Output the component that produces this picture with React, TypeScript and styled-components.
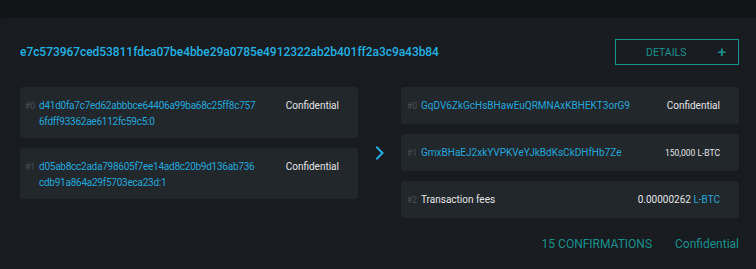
import React from 'react';
import styled, { createGlobalStyle } from 'styled-components';

const GlobalStyle = createGlobalStyle`
  html, body {
    margin: 0;
    padding: 0;
    background: #121418;
  }
  body {
    font-family: Roboto, "Liberation Sans", sans-serif;
    -webkit-font-smoothing: antialiased;
  }
`;

const Page = styled.div`
  padding-top: 18px;
  width: 756px;
  height: 269px;
  box-sizing: border-box;
  overflow: hidden;
`;

const Card = styled.section`
  background: #181b1f;
  height: 251px;
  padding: 21px 17px 0 20px;
  box-sizing: border-box;
  border-top-left-radius: 3px;
`;

const Header = styled.div`
  display: flex;
  align-items: center;
  justify-content: space-between;
  height: 26px;
`;

const TxId = styled.div`
  color: #22b2e3;
  font-size: 12px;
  font-weight: 500;
  letter-spacing: -0.05px;
`;

const DetailsButton = styled.button`
  width: 124px;
  height: 26px;
  box-sizing: border-box;
  border: 1px solid #1a948f;
  background: transparent;
  color: #1a928e;
  font-family: inherit;
  font-size: 10.5px;
  display: flex;
  align-items: center;
  justify-content: space-between;
  padding: 0 12px 0 30px;
  cursor: pointer;
`;

const Plus = styled.span`
  font-size: 15px;
  font-weight: 500;
  line-height: 1;
`;

const Flow = styled.div`
  display: grid;
  grid-template-columns: 338px 43px 338px;
  align-items: start;
  margin-top: 22px;
`;

const Column = styled.div`
  display: flex;
  flex-direction: column;
  gap: 10px;
`;

const Row = styled.div<{ $tall?: boolean }>`
  background: #22272c;
  border-radius: 3px;
  display: flex;
  align-items: ${p => (p.$tall ? 'flex-start' : 'center')};
  height: ${p => (p.$tall ? '51px' : '37px')};
  box-sizing: border-box;
  padding: ${p => (p.$tall ? '11px 19px 0 5px' : '0 19px 0 6px')};
`;

const Index = styled.span`
  color: #4b5158;
  font-size: 8.5px;
  width: 14px;
  flex-shrink: 0;
  line-height: 16px;
`;

const Hash = styled.span`
  color: #22a8dc;
  font-size: 10px;
  line-height: 16px;
  letter-spacing: -0.25px;
  flex: 1;
  word-break: break-all;
`;

const Address = styled.span`
  color: #22a8dc;
  font-size: 10px;
  line-height: 16px;
  flex: 1;
`;

const Label = styled.span`
  color: #e4e5e6;
  font-size: 10px;
  line-height: 16px;
  flex: 1;
`;

const Amount = styled.span<{ $small?: boolean }>`
  color: #e4e5e6;
  font-size: ${p => (p.$small ? '8.5px' : '10px')};
  line-height: 16px;
  white-space: nowrap;
`;

const Unit = styled.span`
  color: #22a8dc;
`;

const ArrowCell = styled.div`
  display: flex;
  justify-content: center;
  align-self: center;
`;

const Footer = styled.div`
  display: flex;
  justify-content: flex-end;
  gap: 23px;
  margin-top: 18px;
  color: #1a928e;
  font-size: 12px;
  line-height: 16px;
`;

const inputs = [
  { hash: 'd41d0fa7c7ed62abbbce64406a99ba68c25ff8c757', tail: '6fdff93362ae6112fc59c5:0' },
  { hash: 'd05ab8cc2ada798605f7ee14ad8c20b9d136ab736', tail: 'cdb91a864a29f5703eca23d:1' },
];

const App: React.FC = () => {
  return (
    <Page>
      <GlobalStyle />
      <Card>
        <Header>
          <TxId>e7c573967ced53811fdca07be4bbe29a0785e4912322ab2b401ff2a3c9a43b84</TxId>
          <DetailsButton>
            <span>DETAILS</span>
            <Plus>+</Plus>
          </DetailsButton>
        </Header>

        <Flow>
          <Column>
            {inputs.map((input, i) => (
              <Row $tall key={i}>
                <Index>#{i}</Index>
                <Hash>
                  {input.hash}
                  <br />
                  {input.tail}
                </Hash>
                <Amount>Confidential</Amount>
              </Row>
            ))}
          </Column>

          <ArrowCell>
            <svg width="10" height="14" viewBox="0 0 10 14" fill="none">
              <path d="M2 1.5 L7.5 7 L2 12.5" stroke="#22aee2" strokeWidth="2" strokeLinecap="square" />
            </svg>
          </ArrowCell>

          <Column>
            <Row>
              <Index>#0</Index>
              <Address>GqDV6ZkGcHsBHawEuQRMNAxKBHEKT3orG9</Address>
              <Amount>Confidential</Amount>
            </Row>
            <Row>
              <Index>#1</Index>
              <Address>GmxBHaEJ2xkYVPKVeYJkBdKsCkDHfHb7Ze</Address>
              <Amount $small>150,000 L-BTC</Amount>
            </Row>
            <Row>
              <Index>#2</Index>
              <Label>Transaction fees</Label>
              <Amount>
                0.00000262 <Unit>L-BTC</Unit>
              </Amount>
            </Row>
          </Column>
        </Flow>

        <Footer>
          <span>15 CONFIRMATIONS</span>
          <span>Confidential</span>
        </Footer>
      </Card>
    </Page>
  );
};

export default App;
